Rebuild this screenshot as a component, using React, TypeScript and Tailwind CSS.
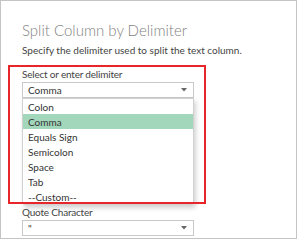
import React from "react";

const OPTIONS = ["Colon", "Comma", "Equals Sign", "Semicolon", "Space", "Tab", "--Custom--"];

function Arrow() {
  return (
    <svg width="6" height="4" viewBox="0 0 6 4" className="shrink-0">
      <path d="M0 0 L6 0 L3 3.5 Z" fill="#666" />
    </svg>
  );
}

function SelectBox({ value }: { value: string }) {
  return (
    <div className="w-[172px] h-[16px] border border-[#c9c9c9] bg-white flex items-center justify-between pl-[5px] pr-[6px] text-[10px] text-[#333] leading-none">
      <span>{value}</span>
      <Arrow />
    </div>
  );
}

export default function App() {
  return (
    <div
      className="w-[300px] h-[240px] bg-white relative overflow-hidden"
      style={{ fontFamily: 'Lato, "Open Sans", sans-serif' }}
    >
      {/* Dialog frame */}
      <div className="w-[297px] h-[239px] border border-[#c4c4c4] pl-[21px]">
        {/* Heading */}
        <h1 className="mt-[19px] h-[20px] text-[15px] font-light text-[#7f7f7f] leading-[20px]">
          Split Column by Delimiter
        </h1>
        <p className="mt-[3px] h-[14px] text-[10px] text-[#444] leading-[14px]">
          Specify the delimiter used to split the text column.
        </p>

        {/* Delimiter */}
        <div className="mt-[10px] h-[14px] text-[10px] text-[#444] leading-[14px] tracking-[-0.2px]">
          Select or enter delimiter
        </div>
        <div className="mt-[1px]">
          <SelectBox value="Comma" />
        </div>

        {/* Quote character */}
        <div className="mt-[107px] h-[14px] text-[10px] text-[#444] leading-[14px] tracking-[-0.2px]">
          Quote Character
        </div>
        <div className="mt-[1px]">
          <SelectBox value={'"'} />
        </div>
      </div>

      {/* Open dropdown list */}
      <div className="absolute left-[22px] top-[98px] w-[172px] bg-white border border-[#d0d0d0] rounded-b-[3px] shadow-[2px_3px_5px_rgba(0,0,0,0.18)]">
        {OPTIONS.map((opt) => (
          <div
            key={opt}
            className={
              "h-[15px] pl-[5px] flex items-center text-[10px] text-[#333] leading-none " +
              (opt === "Comma" ? "bg-[#a3d7bc]" : "")
            }
          >
            {opt}
          </div>
        ))}
      </div>

      {/* Red highlight annotation */}
      <div className="absolute left-[8px] top-[65px] w-[198px] h-[139px] border-2 border-[#e8262a] pointer-events-none" />
    </div>
  );
}
